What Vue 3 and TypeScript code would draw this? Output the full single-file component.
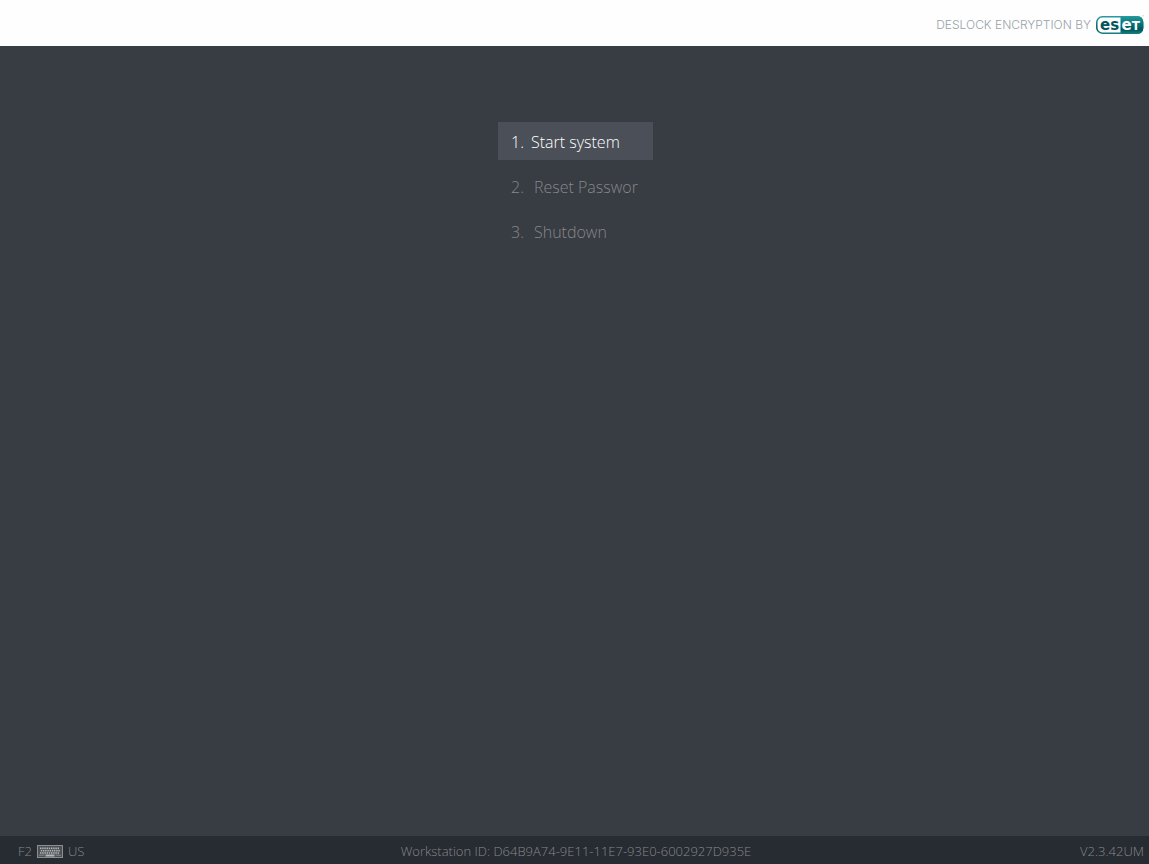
<script setup lang="ts">
import { ref } from 'vue'

interface MenuItem {
  id: number
  label: string
}

const items: MenuItem[] = [
  { id: 1, label: 'Start system' },
  { id: 2, label: 'Reset Passwor' },
  { id: 3, label: 'Shutdown' },
]
const selected = ref(1)
const keyRows = [
  { y: 2.5, xs: [3, 5.2, 7.4, 9.6, 11.8, 14, 16.2, 18.4, 20.6] },
  { y: 4.9, xs: [3.8, 6, 8.2, 10.4, 12.6, 14.8, 17, 19.2, 21.4] },
  { y: 7.2, xs: [3, 5.2, 7.4, 9.6, 11.8, 14, 16.2, 18.4, 20.6] },
]
</script>

<template>
  <div class="screen">
    <header class="topbar">
      <span class="product">DESLOCK ENCRYPTION BY</span>
      <svg class="logo" viewBox="0 0 48 20" role="img" aria-label="eset">
        <defs>
          <linearGradient id="teal" x1="0" y1="0" x2="0" y2="1">
            <stop offset="0" stop-color="#279a9b" />
            <stop offset="0.5" stop-color="#006f75" />
            <stop offset="0.75" stop-color="#00575d" />
            <stop offset="1" stop-color="#168185" />
          </linearGradient>
        </defs>
        <rect x="0.8" y="1.8" width="45.9" height="16.4" rx="5.5" fill="#fff" stroke="url(#teal)" stroke-width="1.5" />
        <path d="M24.5 1h16.5Q47.2 1 47.2 7v6Q47.2 19 41 19H24.5Z" fill="url(#teal)" />
        <text class="mark dark" x="4" y="14.5">es</text>
        <text class="mark light" x="25.5" y="14.5">e<tspan class="cap">T</tspan></text>
        <circle cx="47" cy="0.8" r="0.5" fill="#78aeb1" />
      </svg>
    </header>

    <main class="content">
      <nav class="menu" aria-label="Startup menu">
        <button
          v-for="item in items"
          :key="item.id"
          type="button"
          class="item"
          :class="{ active: item.id === selected }"
          @click="selected = item.id"
        >
          <span>{{ item.id }}.</span>
          <span>{{ item.label }}</span>
        </button>
      </nav>
    </main>

    <footer class="statusbar">
      <button type="button" class="layout">
        <span>F2</span>
        <svg class="keyboard" viewBox="0 0 26 13" aria-hidden="true">
          <rect x="0.5" y="0.5" width="25" height="12" fill="#4d5156" stroke="#8b8d8f" />
          <template v-for="row in keyRows" :key="row.y">
            <rect v-for="x in row.xs" :key="x" :x="x" :y="row.y" width="1.4" height="1.6" fill="#b4b6b7" />
          </template>
          <path d="M2 10.3h5.5M18.5 10.3h5.5" stroke="#77797c" stroke-width="1.4" />
          <rect x="8.5" y="9.5" width="9" height="2" fill="#b4b6b7" />
        </svg>
        <span>US</span>
      </button>
      <span>Workstation ID: D64B9A74-9E11-11E7-93E0-6002927D935E</span>
      <span class="version">V2.3.42UM</span>
    </footer>
  </div>
</template>

<style>
body {
  margin: 0;
  background: #383c43;
}
</style>

<style scoped>
.screen {
  min-height: 100vh;
  display: flex;
  flex-direction: column;
  background: #383c43;
  color: #86888a;
  font-family: "Open Sans", "Noto Sans", sans-serif;
  font-weight: 300;
}
.topbar {
  height: 46px;
  box-sizing: border-box;
  padding: 3px 5px 0 0;
  display: flex;
  align-items: center;
  justify-content: flex-end;
  gap: 5px;
  background: #fefefe;
}
.product {
  font-family: Inter, "Open Sans", sans-serif;
  font-weight: 300;
  font-size: 12px;
  line-height: 20px;
  color: #98a2a7;
}
.logo {
  width: 48px;
  height: 20px;
  overflow: visible;
}
.mark {
  font-family: "DejaVu Sans", sans-serif;
  font-weight: 700;
  font-size: 15px;
}
.dark {
  fill: #00575d;
}
.light {
  fill: #fff;
}
.cap {
  font-size: 12px;
}
.content {
  flex: 1;
  display: flex;
  justify-content: center;
  align-items: flex-start;
  padding: 76px 0 0 2px;
}
.menu {
  width: 155px;
  display: flex;
  flex-direction: column;
  gap: 7px;
}
button {
  font: inherit;
  color: inherit;
  background: none;
  border: 0;
  cursor: pointer;
}
.item {
  height: 38px;
  padding: 2px 13px 0;
  display: flex;
  align-items: center;
  gap: 10px;
  font-size: 16px;
  line-height: 22px;
  white-space: nowrap;
}
.item.active {
  gap: 7px;
  background: #4b4f57;
  color: #fff;
}
.statusbar {
  height: 28px;
  box-sizing: border-box;
  padding: 2px 5px 0 8px;
  display: grid;
  grid-template-columns: 1fr auto 1fr;
  align-items: center;
  background: #272b32;
  font-size: 13px;
  line-height: 18px;
}
.layout {
  display: flex;
  align-items: center;
  gap: 5px;
  padding: 0 0 0 10px;
}
.keyboard {
  width: 26px;
  height: 13px;
}
.version {
  text-align: right;
}
</style>
